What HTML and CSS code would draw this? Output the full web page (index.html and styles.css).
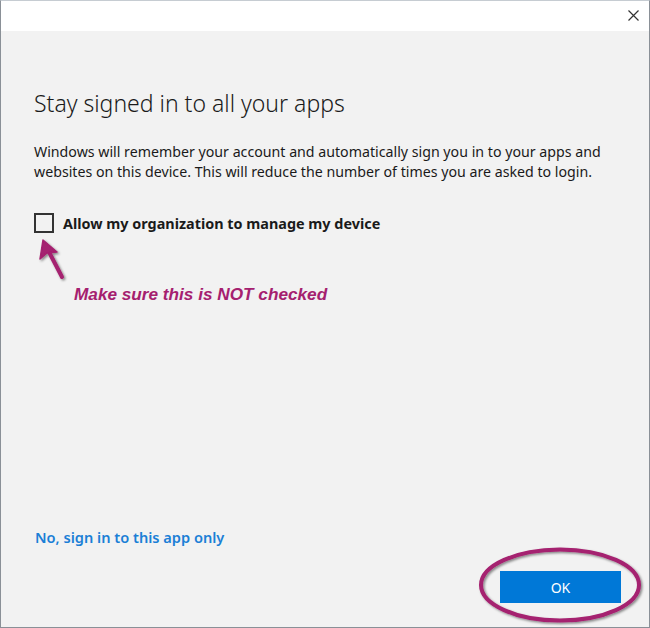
FILE: index.html
```html
<!DOCTYPE html>
<html lang="en">
<head>
<meta charset="utf-8">
<title>Stay signed in to all your apps</title>
<link rel="stylesheet" href="styles.css">
</head>
<body>
<div class="window">
  <div class="titlebar">
    <button class="close" aria-label="Close">
      <svg width="11" height="11" viewBox="0 0 11 11"><path d="M0.5 0.5 L10.5 10.5 M10.5 0.5 L0.5 10.5" stroke="#333" stroke-width="1.2" fill="none"/></svg>
    </button>
  </div>
  <div class="content">
    <h1 class="title">Stay signed in to all your apps</h1>
    <p class="desc">Windows will remember your account and automatically sign you in to your apps and websites on this device. This will reduce the number of times you are asked to login.</p>
    <label class="check">
      <span class="box"></span>
      <span class="check-label">Allow my organization to manage my device</span>
    </label>
    <div class="note">Make sure this is NOT checked</div>
    <div class="spacer"></div>
    <a class="link" href="#">No, sign in to this app only</a>
    <div class="actions">
      <button class="ok">OK</button>
    </div>
  </div>
  <svg class="marks" width="650" height="628" viewBox="0 0 650 628">
    <defs>
      <filter id="sh" x="-20%" y="-20%" width="140%" height="140%">
        <feDropShadow dx="1.5" dy="1.5" stdDeviation="1.2" flood-color="#000" flood-opacity="0.45"/>
      </filter>
    </defs>
    <g filter="url(#sh)">
      <path d="M62 277 L48 250" stroke="#a5206f" stroke-width="4" stroke-linecap="round" fill="none"/>
      <path d="M43 240 L40 259 L47 253 L57 252 Z" fill="#a5206f" stroke="#a5206f" stroke-width="1.5" stroke-linejoin="round"/>
      <ellipse cx="560" cy="585" rx="79" ry="35.5" fill="none" stroke="#a5206f" stroke-width="4"/>
    </g>
  </svg>
</div>
</body>
</html>
```
FILE: styles.css
```css
* { box-sizing: border-box; }
html, body { margin: 0; padding: 0; background: #f2f2f2; }
.window {
  position: relative;
  width: 650px;
  height: 628px;
  border: 1px solid #8a9097;
  border-top-color: #c6ccd2;
  background: #f2f2f2;
  display: flex;
  flex-direction: column;
  font-family: "Noto Sans", "Open Sans", sans-serif;
  color: #1a1a1a;
}
.titlebar {
  height: 30px;
  background: #ffffff;
  display: flex;
  justify-content: flex-end;
  align-items: flex-start;
}
.close {
  border: 0;
  background: transparent;
  padding: 9px 10px 0 0;
  margin: 0;
  line-height: 0;
}
.content {
  flex: 1;
  display: flex;
  flex-direction: column;
  padding: 0 20px 0 33px;
}
.title {
  margin: 56px 0 0 0;
  font-size: 23px;
  font-weight: 300;
  line-height: 32px;
  color: #1a1a1a;
}
.desc {
  margin: 23px 0 0 0;
  font-size: 14.2px;
  line-height: 19.5px;
  color: #1a1a1a;
}
.check {
  margin-top: 31px;
  display: flex;
  align-items: center;
  gap: 9px;
}
.box {
  width: 20px;
  height: 20px;
  border: 2px solid #333333;
  background: transparent;
}
.check-label {
  font-size: 14.4px;
  font-weight: 700;
  color: #1a1a1a;
  padding-top: 2px;
}
.note {
  margin: 50px 0 0 40px;
  font-family: "Liberation Sans", Arial, sans-serif;
  font-style: italic;
  font-weight: 700;
  font-size: 17.2px;
  line-height: 22px;
  color: #a5206f;
}
.spacer { flex: 1; }
.link {
  font-size: 14.6px;
  font-weight: 600;
  color: #1b7fd6;
  text-decoration: none;
  line-height: 20px;
  margin-left: 1px;
}
.actions {
  display: flex;
  justify-content: flex-end;
  margin-top: 24px;
  margin-bottom: 24px;
}
.ok {
  width: 121px;
  height: 32px;
  border: 0;
  background: #0078d7;
  color: #ffffff;
  font-family: "Noto Sans", "Open Sans", sans-serif;
  font-size: 14px;
  padding: 0;
  margin-right: 8px;
}
.marks {
  position: absolute;
  left: -1px;
  top: -1px;
  pointer-events: none;
}
```
